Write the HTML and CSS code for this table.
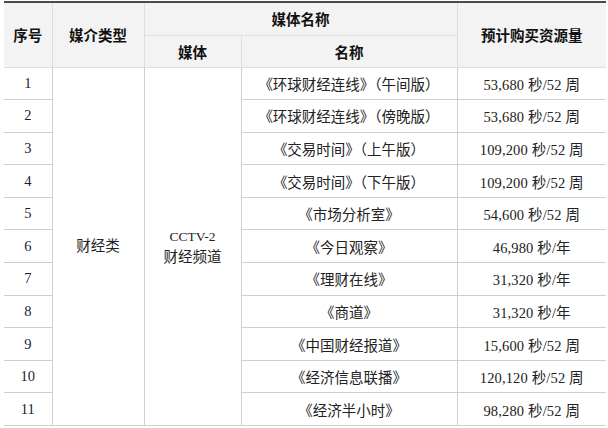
FILE: index.html
```html
<!DOCTYPE html>
<html lang="zh-CN">
<head>
<meta charset="utf-8">
<link rel="stylesheet" href="styles.css">
</head>
<body>
<table class="media">
  <colgroup>
    <col class="c1"><col class="c2"><col class="c3"><col class="c4"><col class="c5">
  </colgroup>
  <thead>
    <tr class="h1">
      <th rowspan="2">序号</th>
      <th rowspan="2">媒介类型</th>
      <th colspan="2">媒体名称</th>
      <th rowspan="2">预计购买资源量</th>
    </tr>
    <tr class="h2">
      <th>媒体</th>
      <th>名称</th>
    </tr>
  </thead>
  <tbody>
    <tr><td class="num">1</td><td rowspan="11" class="merge">财经类</td><td rowspan="11" class="merge"><span class="latin">CCTV-2</span><br>财经频道</td><td>《环球财经连线》（午间版）</td><td class="qty">53,680 秒/52 周</td></tr>
    <tr><td class="num">2</td><td>《环球财经连线》（傍晚版）</td><td class="qty">53,680 秒/52 周</td></tr>
    <tr><td class="num">3</td><td>《交易时间》（上午版）</td><td class="qty">109,200 秒/52 周</td></tr>
    <tr><td class="num">4</td><td>《交易时间》（下午版）</td><td class="qty">109,200 秒/52 周</td></tr>
    <tr><td class="num">5</td><td>《市场分析室》</td><td class="qty">54,600 秒/52 周</td></tr>
    <tr><td class="num">6</td><td>《今日观察》</td><td class="qty">46,980 秒/年</td></tr>
    <tr><td class="num">7</td><td>《理财在线》</td><td class="qty">31,320 秒/年</td></tr>
    <tr><td class="num">8</td><td>《商道》</td><td class="qty">31,320 秒/年</td></tr>
    <tr><td class="num">9</td><td>《中国财经报道》</td><td class="qty">15,600 秒/52 周</td></tr>
    <tr><td class="num">10</td><td>《经济信息联播》</td><td class="qty">120,120 秒/52 周</td></tr>
    <tr><td class="num">11</td><td>《经济半小时》</td><td class="qty">98,280 秒/52 周</td></tr>
  </tbody>
</table>
</body>
</html>
```
FILE: styles.css
```css
html, body {
  margin: 0;
  background: #ffffff;
}
body {
  padding: 1px 2px 0 4px;
}
.media {
  border-collapse: collapse;
  table-layout: fixed;
  width: 602px;
  font-family: "Liberation Serif", "Noto Sans CJK SC", serif;
  font-size: 14.5px;
  color: #222;
  border-top: 2px solid #4a4a4a;
  border-bottom: 1px solid #9a9a9a;
}
.c1 { width: 48px; }
.c2 { width: 92px; }
.c3 { width: 97px; }
.c4 { width: 216px; }
.c5 { width: 149px; }

.media th,
.media td {
  padding: 0;
  text-align: center;
  vertical-align: middle;
  border: 1px solid #cfcfcf;
}
.media th {
  background: #f3f3f3;
  font-family: "Noto Sans CJK SC", sans-serif;
  font-weight: 700;
  color: #111;
  border-color: #dedede;
}
.media tr > :first-child { border-left: none; }
.media tr > :last-child { border-right: none; }
.media .h2 > :first-child { border-left: 1px solid #dedede; }
.media tbody tr:first-child td { border-top: 1px solid #bdbdbd; }
.media td {
  font-weight: 400;
}
.h1 { height: 33px; }
.h2 { height: 32px; }
.media tbody tr { height: 32.6px; }
.merge {
  line-height: 20px;
  border-color: #c4c4c4;
}
.latin {
  font-family: "Liberation Serif", serif;
  font-size: 13.5px;
}
.qty {
  letter-spacing: 0.15px;
}
.num {
  color: #1c1c3a;
}
```
